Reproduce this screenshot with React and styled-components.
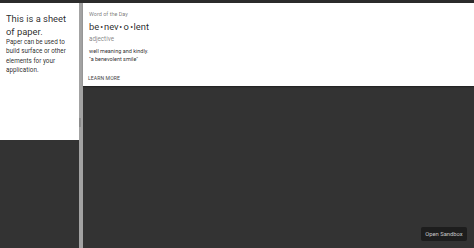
import React from 'react'
import styled, { createGlobalStyle } from 'styled-components';

const Global = createGlobalStyle`
html, body {
  margin: 0;
  padding: 0;
  background: #333333;
  font-family: Roboto, "Liberation Sans", Arial, sans-serif;
}
`;

const App = () => {
  return (
    <>
      <Global/>
      <Frame>
        <TopBar/>
        <Panes>
          <LeftPane>
            <Sheet>
              <Heading>This is a sheet of paper.</Heading>
              <Body>Paper can be used to build surface or other elements for your application.</Body>
            </Sheet>
          </LeftPane>
          <Divider>
            <Handle/>
          </Divider>
          <RightPane>
            <Card>
              <CardContent>
                <Overline>Word of the Day</Overline>
                <Word>
                  be<Bullet>•</Bullet>nev<Bullet>•</Bullet>o<Bullet>•</Bullet>lent
                </Word>
                <Muted>adjective</Muted>
                <Small>
                  well meaning and kindly.
                  <br/>
                  {'"a benevolent smile"'}
                </Small>
              </CardContent>
              <CardActions>
                <TextButton>Learn More</TextButton>
              </CardActions>
            </Card>
          </RightPane>
        </Panes>
        <SandboxButton>Open Sandbox</SandboxButton>
      </Frame>
    </>
  )
}

const Frame=styled.div`
position: relative;
height: 100vh;
display: flex;
flex-direction: column;
overflow: hidden;
`;
const TopBar=styled.div`
height: 3px;
background: #2b2b2b;
flex-shrink: 0;
`;
const Panes=styled.div`
flex: 1;
display: flex;
align-items: stretch;
`;
const LeftPane=styled.div`
width: 79px;
flex-shrink: 0;
`;
const Sheet=styled.div`
background: #fff;
height: 137px;
box-sizing: border-box;
padding: 10px 6px;
color: rgba(0,0,0,0.85);
`;
const Heading=styled.div`
font-size: 9.4px;
line-height: 12.5px;
font-weight: 400;
`;
const Body=styled.div`
font-size: 6.3px;
line-height: 9.4px;
`;
const Divider=styled.div`
width: 4px;
flex-shrink: 0;
background: #a3a3a3;
display: flex;
flex-direction: column;
justify-content: center;
align-items: flex-start;
`;
const Handle=styled.div`
width: 2px;
height: 9px;
background: #8c8c8c;
margin-top: -6px;
`;
const RightPane=styled.div`
flex: 1;
`;
const Card=styled.div`
background: #fff;
height: 83px;
display: flex;
flex-direction: column;
box-shadow: 0 1px 1px rgba(0,0,0,0.2), 0 1px 2px rgba(0,0,0,0.14);
`;
const CardContent=styled.div`
padding: 8px 6px 0;
`;
const Overline=styled.div`
font-size: 5.5px;
line-height: 7.9px;
color: rgba(0,0,0,0.55);
margin-bottom: 2.4px;
`;
const Word=styled.div`
font-size: 9.4px;
line-height: 12.5px;
color: rgba(0,0,0,0.85);
margin-bottom: 1px;
`;
const Bullet=styled.span`
display: inline-block;
margin: 0 0.8px;
transform: scale(0.9);
`;
const Muted=styled.div`
font-size: 6.3px;
line-height: 9.4px;
color: rgba(0,0,0,0.5);
margin-bottom: 4px;
`;
const Small=styled.div`
font-size: 5.5px;
line-height: 7.9px;
color: rgba(0,0,0,0.85);
`;
const CardActions=styled.div`
display: flex;
align-items: center;
padding: 10px 3px 3px;
`;
const TextButton=styled.button`
border: none;
background: none;
font-family: inherit;
font-size: 5.1px;
font-weight: 400;
line-height: 8.9px;
text-transform: uppercase;
letter-spacing: 0.1px;
color: #444;
padding: 0 2px;
cursor: pointer;
`;
const SandboxButton=styled.button`
position: absolute;
right: 7px;
bottom: 7px;
width: 46px;
height: 14px;
border: none;
border-radius: 2px;
background: #1d1d1d;
color: #c8c8c8;
font-family: inherit;
font-size: 5.8px;
padding: 0;
`;

export default App;
